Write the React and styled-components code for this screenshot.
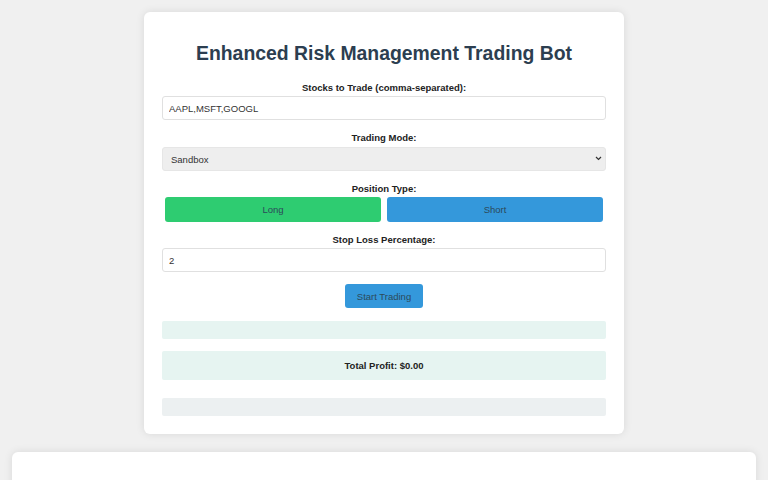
import React from "react";
import styled, { createGlobalStyle } from "styled-components";

const Global = createGlobalStyle`
  html, body { margin: 0; padding: 0; background: #f0f0f0; }
  body { font-family: "Liberation Sans", Arial, sans-serif; color: #333; }
  * { box-sizing: border-box; }
`;

const Page = styled.div`
  padding: 12px;
  display: flex;
  flex-direction: column;
  gap: 18px;
`;

const Card = styled.div`
  width: 480px;
  margin: 0 auto;
  background: #fff;
  border-radius: 6px;
  box-shadow: 0 0 8px rgba(0,0,0,0.1);
  padding: 24px 18px 18px;
`;

const WideCard = styled.div`
  background: #fff;
  border-radius: 6px;
  box-shadow: 0 0 8px rgba(0,0,0,0.1);
  height: 60px;
`;

const Title = styled.h1`
  margin: 0 0 12px;
  text-align: center;
  font-size: 19.4px;
  font-weight: bold;
  color: #2c3e50;
  line-height: 34px;
`;

const Field = styled.div`
  margin-bottom: 12px;
`;

const Label = styled.label`
  display: block;
  text-align: center;
  font-size: 9.5px;
  font-weight: bold;
  color: #222;
  margin-bottom: 2px;
  line-height: 12px;
`;

const TextInput = styled.input`
  display: block;
  width: 100%;
  height: 24px;
  border: 1px solid #e0e0e0;
  border-radius: 3px;
  padding: 0 6px;
  font-family: "Liberation Sans", Arial, sans-serif;
  font-size: 9.5px;
  color: #333;
  background: #fff;
`;

const SelectWrap = styled.div`
  position: relative;
  margin-top: 3px;
`;

const Select = styled.select`
  display: block;
  width: 100%;
  height: 24px;
  border: 1px solid #e6e6e6;
  border-radius: 3px;
  padding: 0 8px;
  font-family: "Liberation Sans", Arial, sans-serif;
  font-size: 9.5px;
  color: #333;
  background: #eee;
  appearance: none;
  -webkit-appearance: none;
`;

const Chevron = styled.svg`
  position: absolute;
  right: 4px;
  top: 9px;
  width: 7px;
  height: 5px;
  pointer-events: none;
`;

const ButtonRow = styled.div`
  display: flex;
`;

const PosButton = styled.button`
  flex: 1;
  margin: 0 3px;
  height: 25px;
  border: none;
  border-radius: 3px;
  background: ${(p) => p.$color};
  color: #2c4a5a;
  font-family: "Liberation Sans", Arial, sans-serif;
  font-size: 9.5px;
`;

const Center = styled.div`
  display: flex;
  justify-content: center;
  margin: 1px 0 13px;
`;

const StartButton = styled.button`
  width: 78px;
  height: 24px;
  border: none;
  border-radius: 3px;
  background: #3498db;
  color: #2c4a5a;
  font-family: "Liberation Sans", Arial, sans-serif;
  font-size: 9.5px;
`;

const StatusBox = styled.div`
  height: ${(p) => p.$h}px;
  margin-bottom: ${(p) => p.$mb}px;
  background: ${(p) => p.$bg};
  border-radius: 2px;
  display: flex;
  align-items: center;
  justify-content: center;
  font-size: 9.5px;
  font-weight: bold;
  color: #222;
`;

export default function App() {
  return (
    <>
      <Global />
      <Page>
        <Card>
          <Title>Enhanced Risk Management Trading Bot</Title>
          <Field>
            <Label>Stocks to Trade (comma-separated):</Label>
            <TextInput defaultValue="AAPL,MSFT,GOOGL" />
          </Field>
          <Field>
            <Label>Trading Mode:</Label>
            <SelectWrap>
              <Select defaultValue="sandbox">
                <option value="sandbox">Sandbox</option>
                <option value="live">Live</option>
              </Select>
              <Chevron viewBox="0 0 7 5">
                <path d="M1 1 L3.5 3.5 L6 1" fill="none" stroke="#333" strokeWidth="1.2" />
              </Chevron>
            </SelectWrap>
          </Field>
          <Field>
            <Label>Position Type:</Label>
            <ButtonRow>
              <PosButton $color="#2ecc71">Long</PosButton>
              <PosButton $color="#3498db">Short</PosButton>
            </ButtonRow>
          </Field>
          <Field>
            <Label>Stop Loss Percentage:</Label>
            <TextInput defaultValue="2" />
          </Field>
          <Center>
            <StartButton>Start Trading</StartButton>
          </Center>
          <StatusBox $h={18} $mb={12} $bg="#e6f4f1" />
          <StatusBox $h={29} $mb={18} $bg="#e6f4f1">Total Profit: $0.00</StatusBox>
          <StatusBox $h={18} $mb={0} $bg="#ecf0f1" />
        </Card>
        <WideCard />
      </Page>
    </>
  );
}
